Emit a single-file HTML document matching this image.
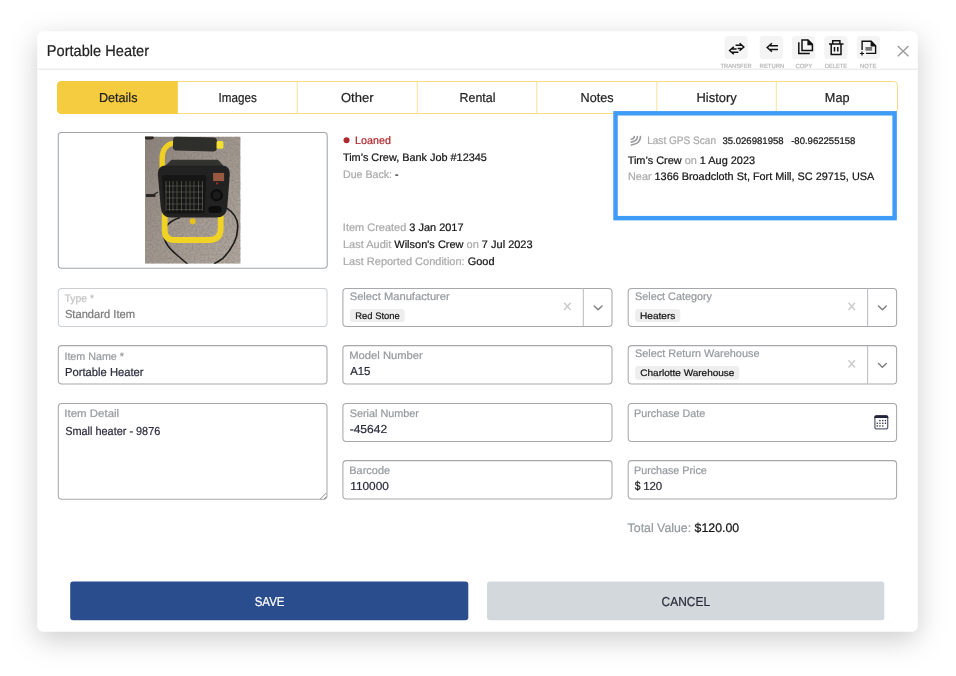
<!DOCTYPE html>
<html lang="en"><head><meta charset="utf-8"><title>Portable Heater</title>
<style>
html,body{margin:0;padding:0;background:#fff}
body{width:956px;height:676px;position:relative;overflow:hidden;font-family:"Liberation Sans",sans-serif}
svg.bg{position:absolute;left:0;top:0}
svg.tx{opacity:.999;will-change:opacity}
.t{position:absolute;white-space:pre;transform-origin:0 0}
</style></head><body>
<svg class="bg" width="956" height="676" viewBox="0 0 956 676">
<defs>
<filter id="sh" x="-10%" y="-15%" width="120%" height="140%"><feDropShadow dx="0" dy="8" stdDeviation="14" flood-color="#000" flood-opacity="0.2"/></filter>
<filter id="bl"><feGaussianBlur stdDeviation="0.55"/></filter>
<clipPath id="pc"><rect x="145" y="136.6" width="95.6" height="127.1"/></clipPath>
</defs>
<!-- modal -->
<rect x="37.5" y="31.4" width="880.1" height="600" rx="6" fill="#fff" filter="url(#sh)"/>
<rect x="37.5" y="68.7" width="880.1" height="1" fill="#e4e4e4"/>
<!-- header icon boxes -->
<g fill="#f4f4f4">
<rect x="724.5" y="36" width="23.1" height="23" rx="3.2"/>
<rect x="759.8" y="36" width="23.1" height="23" rx="3.2"/>
<rect x="792.1" y="36" width="23.1" height="23" rx="3.2"/>
<rect x="824.4" y="36" width="23.1" height="23" rx="3.2"/>
<rect x="856.8" y="36" width="23.1" height="23" rx="3.2"/>
</g>
<g stroke="#111" stroke-width="1.5" fill="none" stroke-linecap="butt" stroke-linejoin="miter">
<!-- transfer -->
<path d="M739.6 43.2L743.8 47L739.6 50.8M735.6 45.2H741.6M737.6 48.6H741.4"/>
<path d="M733.8 46.7L729.6 50.5L733.8 54.3M732 49H736.6M732 52.2H738.4"/>
<!-- return -->
<path d="M771.9 43.3L767.2 47.5L771.9 51.8M770 45.7H778M770 49.5H778"/>
<!-- copy -->
<path d="M798.8 42.3V53.6H809.8" stroke-width="1.5"/>
<path d="M802 40V50.4H812.4V44.4L808 40z" stroke-width="1.5" fill="#f4f4f4"/>
<path d="M807.4 39.4V45.2H813.2z" fill="#111" stroke="none"/>
<!-- delete -->
<path d="M829 43.9H843.5M832.7 43.9V40.7H839.9V43.9M831.2 43.9V54.5H841V43.9"/>
<path d="M834.5 47V51.5M837.8 47V51.5" stroke-width="1.5"/>
<!-- note -->
<path d="M862.1 50V41.3H871.2L875.6 45.8V53.4H866" stroke-width="1.4"/>
<path d="M870.6 40.7V46.4H876.3z" fill="#111" stroke="none"/>
<path d="M859.9 53.5H864.1M862 51.4V55.6" stroke-width="1.2"/>
</g>
<rect x="865.4" y="47" width="6.7" height="3.7" fill="#777"/>
<!-- close -->
<path d="M897.8 46L908.5 56.3M908.5 46L897.8 56.3" stroke="#9c9c9c" stroke-width="1.45" fill="none"/>

<!-- tabs -->
<rect x="57.5" y="81.5" width="840" height="32" rx="4" fill="#fff" stroke="#f9dd86" stroke-width="1"/>
<path d="M61.5 81H177.8V114H61.5a4.5 4.5 0 0 1 -4.5 -4.5V85.5a4.5 4.5 0 0 1 4.5 -4.5z" fill="#f5cc40"/>
<g fill="#fbe6a6">
<rect x="296.7" y="82" width="1.2" height="31"/>
<rect x="416.8" y="82" width="1.2" height="31"/>
<rect x="536.2" y="82" width="1.2" height="31"/>
<rect x="656.3" y="82" width="1.2" height="31"/>
<rect x="775.7" y="82" width="1.2" height="31"/>
</g>
<!-- image box -->
<rect x="58.3" y="132.4" width="268.9" height="135.9" rx="3.2" fill="#fff" stroke="#a1a5aa" stroke-width="1.05"/>
<g clip-path="url(#pc)">
<linearGradient id="cg" x1="0" y1="0" x2="1" y2="1"><stop offset="0" stop-color="#8b827b"/><stop offset="0.45" stop-color="#a0978f"/><stop offset="1" stop-color="#b3aaa2"/></linearGradient>
<rect x="145" y="136.6" width="95.6" height="127.1" fill="url(#cg)"/>
<filter id="nz" x="0" y="0" width="1" height="1"><feTurbulence type="fractalNoise" baseFrequency="0.5" numOctaves="2" seed="4"/><feColorMatrix type="matrix" values="0 0 0 0 0.2  0 0 0 0 0.17  0 0 0 0 0.15  1.8 0 0 0 -0.62"/></filter>
<rect x="145" y="136.6" width="95.6" height="127.1" filter="url(#nz)" opacity="0.55"/>
<ellipse cx="149" cy="137.5" rx="5" ry="2" fill="#2a2623" filter="url(#bl)"/>
<g filter="url(#bl)">
<!-- cords -->
<path d="M225.6 207.4C233 212 238.5 219 237.7 228C237.5 240 231 250 222.5 258.7L214 264" stroke="#1c1c1a" stroke-width="1.6" fill="none"/>
<path d="M180 217.5C170 221 164.5 226 164 233C163 242 170 249 177.5 255.5L187.5 264" stroke="#1c1c1a" stroke-width="1.6" fill="none"/>
<!-- yellow frame back-left tube -->
<path d="M176 142.6C166.5 143.4 162.2 150 162.2 158V170" stroke="#f0d023" stroke-width="5.4" fill="none"/>
<!-- bottom frame -->
<path d="M164.7 211V230.5Q164.7 240 174.5 240H209Q220.7 240 220.7 228.5V214" stroke="#f1d327" stroke-width="5.8" fill="none"/>
<circle cx="192.7" cy="221.3" r="3" fill="#e6c21c"/>
<!-- handle -->
<rect x="173" y="137" width="43.8" height="14" rx="3.4" fill="#2d2d2c" transform="rotate(1.6 195 144)"/>
<rect x="216.6" y="140.9" width="6.8" height="7.8" rx="1.5" fill="#f4e02e"/>
<!-- plug -->
<path d="M146 195.5h9.5" stroke="#2a2826" stroke-width="3"/>
<path d="M153 195L158 192" stroke="#2a2826" stroke-width="1.4"/>
<!-- heater -->
<path d="M171.5 159.8H218L226 169H162z" fill="#33332f"/>
<path d="M166 165.5H222Q230 165.5 229.8 174L227.3 207Q226.5 217.6 216 217.6H171Q161.5 217.6 160.7 207L157.8 174Q157.6 165.5 166 165.5z" fill="#232321"/>
<path d="M164 175.2H204.5Q206.5 175.2 206.4 177.5L204.6 211Q204.4 213.2 202 213.2H167.5Q165.3 213.2 165 211L161.8 177.5Q161.6 175.2 164 175.2z" fill="#161615"/>
<g stroke="#77776c" stroke-width="0.9">
<path d="M166 181V211M169.5 181V211M173 181V211M177 181V211M181.5 181V211M186 181V211M190 181V211M194 181V211M198.5 181V211M202.5 181V211" opacity="0.6"/>
<path d="M165 186H203M165 192H203M166 198H203M166 204H203M167 209.5H202" opacity="0.45"/>
</g>
<rect x="213.1" y="172.9" width="11" height="8.2" fill="#99593f"/>
<circle cx="217.1" cy="183.5" r="1.1" fill="#c02a22"/>
<circle cx="216.7" cy="195.3" r="6.2" fill="#101010"/>
<circle cx="216.7" cy="195.3" r="3.8" fill="#1d1d1d"/>
<rect x="208.5" y="206" width="13" height="7" rx="2.5" fill="#111"/>
</g>
</g>

<!-- status dot -->
<circle cx="346.55" cy="140.3" r="3" fill="#b0292e"/>
<!-- gps highlight box -->
<rect x="615.52" y="113.3" width="279.1" height="104.85" fill="#fff" stroke="#3f9cf6" stroke-width="4.45"/>
<g stroke="#9a9a9e" stroke-width="1.6" fill="none" stroke-linecap="round">
<path d="M634.3 136.6C634.3 138.1 633 138.9 631.3 139.2"/>
<path d="M637.4 136.6C637.4 139.8 634.8 141.6 631.3 142.1"/>
<path d="M640.5 136.6C640.5 141.5 636.5 144.3 631.3 145"/>
</g>

<!-- form fields -->
<g fill="#fff" stroke="#a6a8ab" stroke-width="1.05">
<rect x="58.3" y="288.4" width="268.7" height="38" rx="3.5" stroke="#cbced2"/>
<rect x="342.9" y="288.4" width="269.1" height="38" rx="3.5"/>
<rect x="628.2" y="288.4" width="268.4" height="38" rx="3.5"/>
<rect x="58.3" y="345.6" width="268.7" height="38.3" rx="3.5"/>
<rect x="342.9" y="345.6" width="269.1" height="38.3" rx="3.5"/>
<rect x="628.2" y="345.6" width="268.4" height="38.3" rx="3.5"/>
<rect x="58.3" y="403.5" width="268.7" height="95.8" rx="3.5"/>
<rect x="342.9" y="403.5" width="269.1" height="37.9" rx="3.5"/>
<rect x="628.2" y="403.5" width="268.4" height="37.9" rx="3.5"/>
<rect x="342.9" y="460.6" width="269.1" height="38.3" rx="3.5"/>
<rect x="628.2" y="460.6" width="268.4" height="38.3" rx="3.5"/>
</g>
<g fill="#b9bbbe">
<rect x="582.8" y="288.4" width="1" height="38"/>
<rect x="867.1" y="288.4" width="1" height="38"/>
<rect x="867.1" y="345.6" width="1" height="38.3"/>
</g>
<!-- chips -->
<g fill="#eeeeee">
<rect x="349.8" y="308.9" width="54.9" height="13.2" rx="3"/>
<rect x="635.1" y="308.9" width="45.2" height="13.2" rx="3"/>
<rect x="635.1" y="366.1" width="104.2" height="13.6" rx="3"/>
</g>
<!-- clear x and chevrons -->
<g stroke="#cbcbcb" stroke-width="1.5" fill="none" stroke-linecap="butt">
<path d="M564.2 302.7l6.4 7.3M570.6 302.7l-6.4 7.3"/>
<path d="M848.5 302.7l6.4 7.3M854.9 302.7l-6.4 7.3"/>
<path d="M848.5 360.2l6.4 7.3M854.9 360.2l-6.4 7.3"/>
</g>
<g stroke="#808080" stroke-width="1.5" fill="none" stroke-linecap="round" stroke-linejoin="round">
<path d="M594.2 306l3.9 3.7l3.9 -3.7"/>
<path d="M878.5 306l3.9 3.7l3.9 -3.7"/>
<path d="M878.5 363.5l3.9 3.7l3.9 -3.7"/>
</g>
<!-- textarea resize handle -->
<g stroke="#777" stroke-width="0.8"><path d="M320.3 499L326.2 493.1M323.9 499L326.4 496.6"/></g>
<rect x="874.9" y="416" width="12.8" height="12.9" rx="2" fill="#fff" stroke="#63647a" stroke-width="1.3"/>
<path d="M874.25 417.9V417.3a2 2 0 0 1 2 -2H886.35a2 2 0 0 1 2 2V417.9z" fill="#23233a"/>
<g fill="#23233a">
<rect x="879.3" y="419.9" width="1.3" height="1.3"/><rect x="882.1" y="419.9" width="1.3" height="1.3"/><rect x="884.8" y="419.9" width="1.3" height="1.3"/>
<rect x="876.6" y="422.6" width="1.3" height="1.3"/><rect x="879.3" y="422.6" width="1.3" height="1.3"/><rect x="882.1" y="422.6" width="1.3" height="1.3"/><rect x="884.8" y="422.6" width="1.3" height="1.3"/>
<rect x="876.6" y="425.3" width="1.3" height="1.3"/><rect x="879.3" y="425.3" width="1.3" height="1.3"/><rect x="882.1" y="425.3" width="1.3" height="1.3"/>
</g>

<!-- buttons -->
<rect x="70.2" y="581.4" width="398.1" height="38.8" rx="3" fill="#2a4d8d"/>
<rect x="487" y="581.4" width="397.3" height="38.8" rx="3" fill="#d3d8dd"/>
</svg>
<svg class="bg tx" width="956" height="676" viewBox="0 0 956 676">
<g font-family="'Liberation Sans', sans-serif" text-rendering="geometricPrecision" stroke-width="0.22" style="white-space:pre">
<text x="46.80" y="55.90" font-size="15.5" textLength="102.24" lengthAdjust="spacingAndGlyphs" fill="#222" stroke="#222">Portable Heater</text>
<text x="98.97" y="102.40" font-size="13" textLength="38.49" lengthAdjust="spacingAndGlyphs" fill="#222" stroke="#222">Details</text>
<text x="218.53" y="102.40" font-size="13" textLength="38.20" lengthAdjust="spacingAndGlyphs" fill="#222" stroke="#222">Images</text>
<text x="340.98" y="102.40" font-size="13" textLength="32.53" lengthAdjust="spacingAndGlyphs" fill="#222" stroke="#222">Other</text>
<text x="459.58" y="102.40" font-size="13" textLength="35.85" lengthAdjust="spacingAndGlyphs" fill="#222" stroke="#222">Rental</text>
<text x="580.56" y="102.40" font-size="13" textLength="32.99" lengthAdjust="spacingAndGlyphs" fill="#222" stroke="#222">Notes</text>
<text x="696.54" y="102.40" font-size="13" textLength="40.08" lengthAdjust="spacingAndGlyphs" fill="#222" stroke="#222">History</text>
<text x="824.86" y="102.40" font-size="13" textLength="24.67" lengthAdjust="spacingAndGlyphs" fill="#222" stroke="#222">Map</text>
<text x="355.12" y="144.10" font-size="10.9" textLength="35.77" lengthAdjust="spacingAndGlyphs" fill="#b0292e" stroke="#b0292e">Loaned</text>
<text x="342.96" y="161.10" font-size="10.9" textLength="143.90" lengthAdjust="spacingAndGlyphs" fill="#151515" stroke="#151515">Tim’s Crew, Bank Job #12345</text>
<text x="343.03" y="178.00" font-size="10.9" textLength="55.44" lengthAdjust="spacingAndGlyphs"><tspan fill="#aaaaaa" stroke="#aaaaaa">Due Back: </tspan><tspan fill="#151515" stroke="#151515">-</tspan></text>
<text x="342.89" y="230.60" font-size="10.9" textLength="120.66" lengthAdjust="spacingAndGlyphs"><tspan fill="#aaaaaa" stroke="#aaaaaa">Item Created </tspan><tspan fill="#151515" stroke="#151515">3 Jan 2017</tspan></text>
<text x="343.00" y="247.60" font-size="10.9" textLength="189.59" lengthAdjust="spacingAndGlyphs"><tspan fill="#aaaaaa" stroke="#aaaaaa">Last Audit </tspan><tspan fill="#151515" stroke="#151515">Wilson&#x27;s Crew</tspan><tspan fill="#aaaaaa" stroke="#aaaaaa"> on </tspan><tspan fill="#151515" stroke="#151515">7 Jul 2023</tspan></text>
<text x="343.00" y="264.50" font-size="10.9" textLength="151.61" lengthAdjust="spacingAndGlyphs"><tspan fill="#aaaaaa" stroke="#aaaaaa">Last Reported Condition: </tspan><tspan fill="#151515" stroke="#151515">Good</tspan></text>
<text x="647.17" y="144.30" font-size="10.9" textLength="68.88" lengthAdjust="spacingAndGlyphs" fill="#aaaaaa" stroke="#aaaaaa">Last GPS Scan</text>
<text x="722.44" y="144.30" font-size="9.5" textLength="61.18" lengthAdjust="spacingAndGlyphs" fill="#151515" stroke="#151515">35.026981958</text>
<text x="791.18" y="144.30" font-size="9.5" textLength="64.24" lengthAdjust="spacingAndGlyphs" fill="#151515" stroke="#151515">-80.962255158</text>
<text x="627.65" y="163.80" font-size="10.9" textLength="127.43" lengthAdjust="spacingAndGlyphs"><tspan fill="#151515" stroke="#151515">Tim’s Crew</tspan><tspan fill="#aaaaaa" stroke="#aaaaaa"> on </tspan><tspan fill="#151515" stroke="#151515">1 Aug 2023</tspan></text>
<text x="628.01" y="180.20" font-size="10.9" textLength="246.21" lengthAdjust="spacingAndGlyphs"><tspan fill="#aaaaaa" stroke="#aaaaaa">Near </tspan><tspan fill="#151515" stroke="#151515">1366 Broadcloth St, Fort Mill, SC 29715, USA</tspan></text>
<text x="64.47" y="302.10" font-size="10.9" textLength="29.60" lengthAdjust="spacingAndGlyphs" fill="#c4c4c4" stroke="#c4c4c4">Type *</text>
<text x="64.89" y="318.10" font-size="11.6" textLength="70.14" lengthAdjust="spacingAndGlyphs" fill="#7a7a7a" stroke="#7a7a7a">Standard Item</text>
<text x="64.41" y="359.60" font-size="10.9" textLength="59.56" lengthAdjust="spacingAndGlyphs" fill="#979a9e" stroke="#979a9e">Item Name *</text>
<text x="64.98" y="375.60" font-size="11.6" textLength="78.61" lengthAdjust="spacingAndGlyphs" fill="#2b2b3d" stroke="#2b2b3d">Portable Heater</text>
<text x="64.34" y="417.10" font-size="10.9" textLength="54.83" lengthAdjust="spacingAndGlyphs" fill="#979a9e" stroke="#979a9e">Item Detail</text>
<text x="65.21" y="434.90" font-size="11.6" textLength="95.07" lengthAdjust="spacingAndGlyphs" fill="#2b2b3d" stroke="#2b2b3d">Small heater - 9876</text>
<text x="349.69" y="299.50" font-size="10.9" textLength="100.09" lengthAdjust="spacingAndGlyphs" fill="#979a9e" stroke="#979a9e">Select Manufacturer</text>
<text x="355.33" y="319.00" font-size="9.4" textLength="44.39" lengthAdjust="spacingAndGlyphs" fill="#151515" stroke="#151515">Red Stone</text>
<text x="349.28" y="359.00" font-size="10.9" textLength="73.51" lengthAdjust="spacingAndGlyphs" fill="#979a9e" stroke="#979a9e">Model Number</text>
<text x="350.18" y="375.20" font-size="11.6" textLength="20.20" lengthAdjust="spacingAndGlyphs" fill="#2b2b3d" stroke="#2b2b3d">A15</text>
<text x="349.71" y="417.10" font-size="10.9" textLength="69.27" lengthAdjust="spacingAndGlyphs" fill="#979a9e" stroke="#979a9e">Serial Number</text>
<text x="349.67" y="432.60" font-size="11.6" textLength="37.44" lengthAdjust="spacingAndGlyphs" fill="#2b2b3d" stroke="#2b2b3d">-45642</text>
<text x="349.30" y="473.90" font-size="10.9" textLength="40.79" lengthAdjust="spacingAndGlyphs" fill="#979a9e" stroke="#979a9e">Barcode</text>
<text x="350.20" y="490.10" font-size="11.6" textLength="38.67" lengthAdjust="spacingAndGlyphs" fill="#2b2b3d" stroke="#2b2b3d">110000</text>
<text x="635.01" y="299.50" font-size="10.9" textLength="77.01" lengthAdjust="spacingAndGlyphs" fill="#979a9e" stroke="#979a9e">Select Category</text>
<text x="639.97" y="319.00" font-size="9.4" textLength="35.40" lengthAdjust="spacingAndGlyphs" fill="#151515" stroke="#151515">Heaters</text>
<text x="635.00" y="357.00" font-size="10.9" textLength="124.48" lengthAdjust="spacingAndGlyphs" fill="#979a9e" stroke="#979a9e">Select Return Warehouse</text>
<text x="640.29" y="376.30" font-size="9.4" textLength="94.15" lengthAdjust="spacingAndGlyphs" fill="#151515" stroke="#151515">Charlotte Warehouse</text>
<text x="634.02" y="417.10" font-size="10.9" textLength="71.26" lengthAdjust="spacingAndGlyphs" fill="#979a9e" stroke="#979a9e">Purchase Date</text>
<text x="634.02" y="473.90" font-size="10.9" textLength="72.76" lengthAdjust="spacingAndGlyphs" fill="#979a9e" stroke="#979a9e">Purchase Price</text>
<text x="634.79" y="490.10" font-size="12.4" textLength="5.78" lengthAdjust="spacingAndGlyphs" fill="#151515" stroke="#151515">$</text>
<text x="643.13" y="490.10" font-size="11.6" textLength="19.12" lengthAdjust="spacingAndGlyphs" fill="#2b2b3d" stroke="#2b2b3d">120</text>
<text x="627.62" y="531.90" font-size="12.4" textLength="111.56" lengthAdjust="spacingAndGlyphs"><tspan fill="#979a9e" stroke="#979a9e">Total Value: </tspan><tspan fill="#151515" stroke="#151515">$120.00</tspan></text>
<text x="254.68" y="605.75" font-size="13" textLength="29.82" lengthAdjust="spacingAndGlyphs" fill="#ffffff" stroke="#ffffff">SAVE</text>
<text x="661.59" y="605.75" font-size="13" textLength="48.50" lengthAdjust="spacingAndGlyphs" fill="#2a2a3a" stroke="#2a2a3a">CANCEL</text>
<text x="720.57" y="67.90" font-size="6" textLength="31.10" lengthAdjust="spacingAndGlyphs" fill="#b8b8b8" stroke="#b8b8b8">TRANSFER</text>
<text x="759.61" y="67.90" font-size="6" textLength="24.67" lengthAdjust="spacingAndGlyphs" fill="#b8b8b8" stroke="#b8b8b8">RETURN</text>
<text x="795.40" y="67.90" font-size="6" textLength="16.73" lengthAdjust="spacingAndGlyphs" fill="#b8b8b8" stroke="#b8b8b8">COPY</text>
<text x="825.04" y="67.90" font-size="6" textLength="22.01" lengthAdjust="spacingAndGlyphs" fill="#b8b8b8" stroke="#b8b8b8">DELETE</text>
<text x="860.12" y="67.90" font-size="6" textLength="16.23" lengthAdjust="spacingAndGlyphs" fill="#b8b8b8" stroke="#b8b8b8">NOTE</text>
</g>
</svg>
</body></html>
